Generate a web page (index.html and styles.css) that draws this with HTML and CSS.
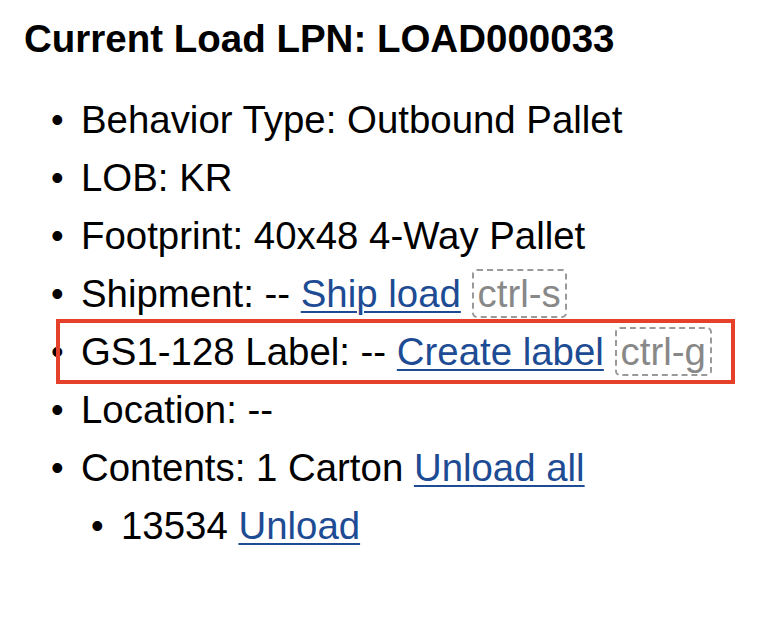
FILE: index.html
```html
<!DOCTYPE html>
<html lang="en">
<head>
  <meta charset="UTF-8" />
  <title>Current Load</title>
  <link rel="stylesheet" href="styles.css">
</head>
<body>

<h2 class="load-title">Current Load LPN: LOAD000033</h2>

<ul class="load-info">
  <li>Behavior Type: Outbound Pallet</li>
  <li>LOB: KR</li>
  <li>Footprint: 40x48 4-Way Pallet</li>
  <li>Shipment: -- <a href="#">Ship load</a> <kbd>ctrl-s</kbd></li>
  <li class="highlight">GS1-128 Label: -- <a href="#">Create label</a> <kbd>ctrl-g</kbd></li>
  <li>Location: --</li>
  <li>Contents: 1 Carton <a href="#">Unload all</a>
    <ul class="contents">
      <li>13534 <a href="#">Unload</a></li>
    </ul>
  </li>
</ul>

</body>
</html>
```

FILE: styles.css
```css
body {
  font-family: "Liberation Sans", Arial, sans-serif;
  background-color: #fff;
  color: #000;
  margin: 0;
  padding: 17px 24px;
}

.load-title {
  font-size: 38.5px;
  font-weight: bold;
  margin: 0;
  line-height: 44px;
}

.load-info {
  margin: 30px 0 0;
  padding-left: 57px;
  font-size: 38.4px;
  line-height: 58px;
}

.load-info ul {
  margin: 0;
  padding-left: 40px;
}

.load-info li {
  list-style: none;
  position: relative;
}

.load-info li::before {
  content: "\2022";
  position: absolute;
  left: -30px;
  font-size: 36px;
}

.load-info a {
  color: #1d4b94;
  text-decoration: underline;
  text-decoration-thickness: 2px;
  text-underline-offset: 4px;
}

kbd {
  font-family: inherit;
  font-size: inherit;
  color: #888;
  border: 2px dashed #999;
  border-radius: 5px;
  padding: 1px 4px;
}

.highlight::after {
  content: "";
  position: absolute;
  top: -4px;
  bottom: -3px;
  left: -25px;
  width: 679px;
  box-sizing: border-box;
  border: 4px solid #e5402a;
  pointer-events: none;
}
```
